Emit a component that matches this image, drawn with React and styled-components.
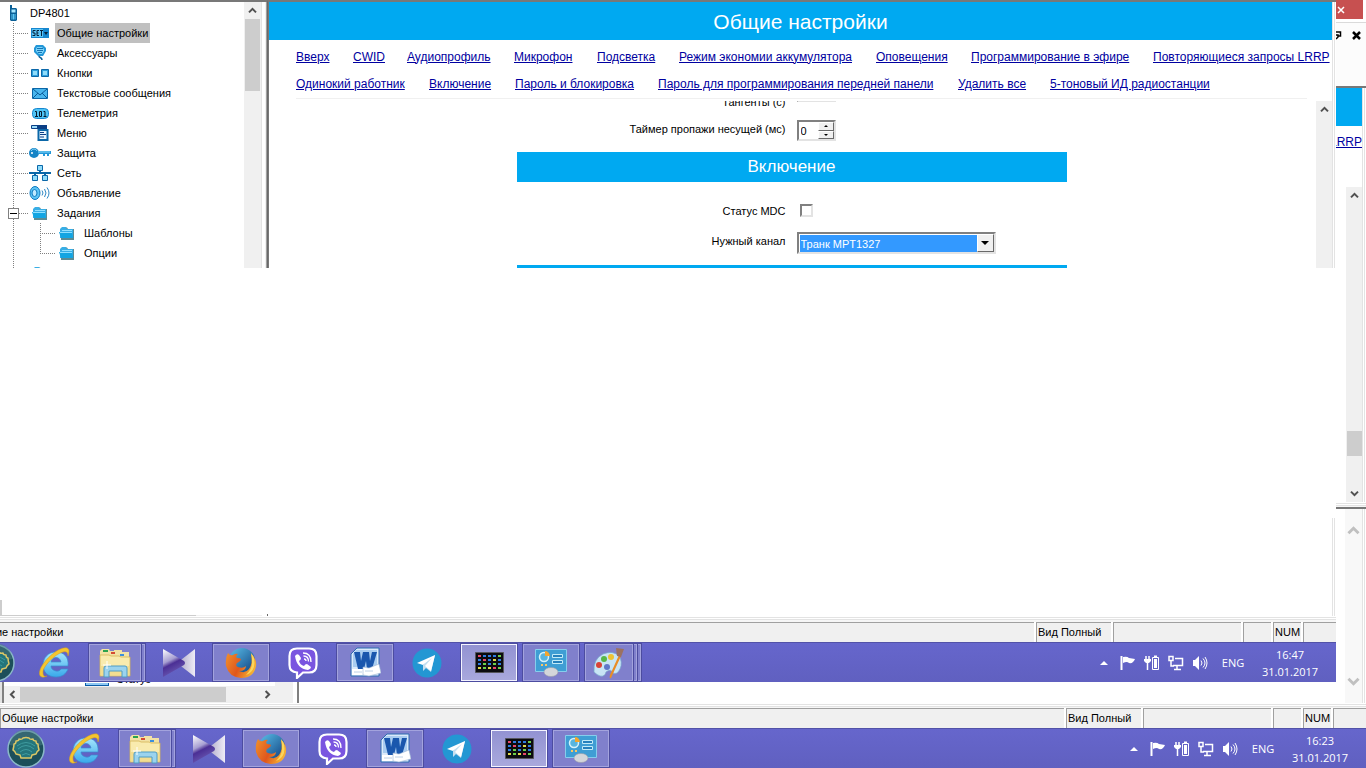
import React from "react";
import styled, { createGlobalStyle, css } from "styled-components";

const GlobalStyle = createGlobalStyle`
  * { box-sizing: border-box; }
  body {
    margin: 0;
    background: #ffffff;
    color: #000000;
    font-family: "Liberation Sans", Arial, sans-serif;
    font-size: 11px;
    line-height: 14px;
  }
  button, input, select { font: inherit; margin: 0; padding: 0; }
  svg { display: block; flex: none; }
`;

/* ---------- page frame ---------- */

const Page = styled.div`
  display: flex;
  flex-direction: column;
  min-height: 100vh;
`;

const Desktop = styled.div`
  display: grid;
  grid-template-columns: minmax(0, 1fr) 30px;
  flex: 1;
`;

const LeftStack = styled.div`
  display: flex;
  flex-direction: column;
`;

const FrontWindow = styled.div`
  display: flex;
  flex-direction: column;
  flex: 1;
  overflow: hidden;
`;

const Workspace = styled.main`
  display: grid;
  grid-template-columns: 268px minmax(0, 1fr);
  grid-template-rows: 268px;
`;

/* ---------- tree ---------- */

const Sidebar = styled.nav`
  display: flex;
  border-top: 2px solid #787878;
  border-right: 1px solid #696969;
  overflow: hidden;
`;

const Tree = styled.ul`
  flex: 1;
  margin: 0;
  padding: 1px 0 0 0;
  list-style: none;
`;

const Branch = styled.li`
  display: flex;
  align-items: center;
  height: 20px;
  padding-left: 13px;
  background: ${(p) =>
    p.$root
      ? "none"
      : "repeating-linear-gradient(to bottom, #808080 0 1px, transparent 1px 2px) 13px 0 / 1px 100% no-repeat"};
`;

const Dots = styled.span`
  flex: none;
  width: ${(p) => p.$w}px;
  height: 1px;
  background: repeating-linear-gradient(to right, #808080 0 1px, transparent 1px 2px);
`;

const SubDots = styled.span`
  flex: none;
  align-self: stretch;
  width: 15px;
  margin-left: 27px;
  background:
    repeating-linear-gradient(to bottom, #808080 0 1px, transparent 1px 2px) 0 0 / 1px ${(p) => (p.$last ? "50%" : "100%")} no-repeat,
    repeating-linear-gradient(to right, #808080 0 1px, transparent 1px 2px) 0 10px / 15px 1px no-repeat;
`;

const Expander = styled.button`
  flex: none;
  display: grid;
  place-items: center;
  width: 11px;
  height: 11px;
  margin-left: -5px;
  border: 1px solid #808080;
  background: #ffffff;
  &::after { content: ""; width: 7px; height: 1px; background: #000000; }
`;

const IconBox = styled.span`
  flex: none;
  display: flex;
  justify-content: center;
  width: 24px;
  margin-right: 3px;
`;

const TreeLabel = styled.a`
  padding: 3px 2px;
  color: #000000;
  text-decoration: none;
  white-space: nowrap;
  background: ${(p) => (p.$selected ? "#c0c0c0" : "transparent")};
`;

const RootIcon = styled.span`
  flex: none;
  width: 19px;
  margin-left: -4px;
`;

/* ---------- scroll bars and edges ---------- */

const ScrollTrack = styled.div`
  flex: ${(p) => (p.$grow ? "1" : "none")};
  display: flex;
  flex-direction: ${(p) => (p.$row ? "row" : "column")};
  align-items: center;
  ${(p) => (p.$row ? "height: 16px; width: 271px;" : "width: 16px;")}
  background: #f0f0f0;
`;

const ScrollArrow = styled.button`
  flex: none;
  display: grid;
  place-items: center;
  width: 16px;
  height: 17px;
  border: 0;
  background: none;
`;

const Thumb = styled.div`
  background: #cdcdcd;
  ${(p) => (p.$row ? `height: 15px; width: ${p.$size}px;` : `width: 15px; height: ${p.$size}px;`)}
`;

const Spacer = styled.div`
  flex: 1;
`;

const Gap = styled.div`
  height: 29px;
`;

const SideEdge = styled.div`
  flex: none;
  width: 7px;
  background: linear-gradient(to right, #f0f0f0 0 1px, #e3e3e3 1px 2px, #ffffff 2px 5px, #f0f0f0 5px 6px, #a0a0a0 6px 7px);
`;

const RightEdge = styled.div`
  flex: none;
  width: 4px;
  background: linear-gradient(to right, #e3e3e3 0 1px, #ffffff 1px 2px, #e3e3e3 2px 3px, #ffffff 3px 4px);
`;

/* ---------- settings panel ---------- */

const Panel = styled.section`
  display: flex;
  border-top: 2px solid #787878;
  min-width: 0;
`;

const PanelMain = styled.div`
  flex: 1;
  display: flex;
  flex-direction: column;
  min-width: 0;
  overflow: hidden;
  border-left: 1px solid #787878;
`;

const Title = styled.h1`
  flex: none;
  margin: 0;
  height: 38px;
  background: #00a9f1;
  color: #ffffff;
  font-size: 21px;
  font-weight: 400;
  line-height: 40px;
  text-align: center;
`;

const LinkArea = styled.div`
  flex: none;
  height: 59px;
  margin: 0 25px 0 27px;
  padding-top: 3px;
  border-bottom: 1px solid #f0f0f0;
`;

const LinkRow = styled.div`
  display: flex;
  height: 27px;
  align-items: center;
`;

const LinkCell = styled.div`
  flex: none;
  width: ${(p) => p.$w}px;
  white-space: nowrap;
`;

const NavLink = styled.a`
  color: #0000a0;
  font-size: 12px;
`;

const ScrollPane = styled.div`
  flex: 1;
  display: flex;
  min-height: 0;
  margin-top: 2px;
  overflow: hidden;
`;

const Form = styled.form`
  flex: 1;
  display: flex;
  flex-direction: column;
  align-items: center;
  margin-top: -20px;
  padding-right: 2px;
`;

const Row = styled.div`
  flex: none;
  display: grid;
  grid-template-columns: 269px 1fr;
  column-gap: 11px;
  width: 550px;
  height: ${(p) => p.$h}px;
  align-items: start;
`;

const Label = styled.label`
  padding-top: ${(p) => p.$top || 0}px;
  text-align: right;
`;

const SectionTitle = styled.h2`
  flex: none;
  width: 550px;
  height: 30px;
  margin: 0 0 ${(p) => p.$gap}px;
  background: #00a9f1;
  color: #ffffff;
  font-size: 17px;
  font-weight: 400;
  line-height: 30px;
  text-align: center;
`;

const sunken = css`
  border: 2px solid;
  border-color: #808080 #e3e3e3 #e3e3e3 #808080;
  background: #ffffff;
`;

const raised = css`
  border: 1px solid;
  border-color: #ffffff #696969 #696969 #ffffff;
  background: #f0f0f0;
`;

const SpinBox = styled.div`
  display: grid;
  grid-template-columns: 1fr 16px;
  width: 39px;
  height: 21px;
  ${sunken}
`;

const SpinInput = styled.input`
  width: 100%;
  border: 0;
  padding-left: 2px;
  outline: 0;
`;

const SpinButtons = styled.div`
  display: grid;
  grid-template-rows: 1fr 1fr;
  min-height: 0;
`;

const SpinButton = styled.button`
  display: grid;
  place-items: center;
  ${raised}
`;

const Check = styled.input`
  appearance: none;
  width: 13px;
  height: 13px;
  margin-left: 3px;
  ${sunken}
`;

const SelectBox = styled.div`
  display: grid;
  grid-template-columns: 1fr 17px;
  width: 199px;
  height: 22px;
  ${sunken}
`;

const Select = styled.select`
  grid-area: 1 / 1 / 2 / 3;
  appearance: none;
  width: 100%;
  padding: 1px 0 0 2px;
  border: 0;
  border-radius: 0;
  outline: 0;
  background: linear-gradient(to right, #3399ff, #3399ff) 1px 1px / calc(100% - 18px) calc(100% - 1px) no-repeat #ffffff;
  color: #ffffff;
`;

const SelectArrow = styled.span`
  grid-area: 1 / 2;
  display: grid;
  place-items: center;
  pointer-events: none;
  z-index: 1;
  ${raised}
`;

/* ---------- lower front edge ---------- */

const Blank = styled.div`
  flex: 1;
  display: flex;
  align-items: flex-end;
  justify-content: space-between;
`;

const TreeRemnant = styled.div`
  width: 268px;
  height: 16px;
  border-left: 2px solid #cdcdcd;
  background:
    linear-gradient(#cdcdcd, #cdcdcd) 0 100% / 194px 1px no-repeat,
    linear-gradient(#f0f0f0, #f0f0f0) 0 100% / 260px 1px no-repeat,
    linear-gradient(#696969, #696969) 100% 100% / 1px 2px no-repeat;
`;

const TallEdge = styled(RightEdge)`
  height: 98px;
`;

const FrameLines = styled.div`
  flex: none;
  height: ${(p) => p.$h || 6}px;
  background: linear-gradient(#ffffff 0 1px, #e3e3e3 1px 2px, #ffffff 2px 3px, #e3e3e3 3px 4px, #f6f6f6 4px 6px);
`;

const ShiftedBars = styled.div`
  flex: none;
  margin-left: -30px;
`;

/* ---------- status bar ---------- */

const StatusRow = styled.footer`
  display: grid;
  grid-template-columns: minmax(0, 1fr) 75px 128px 28px 28px 33px;
  column-gap: 2px;
  height: 20px;
  background: #ffffff;
`;

const StatusCell = styled.div`
  border-top: 1px solid #a0a0a0;
  border-left: 1px solid #a0a0a0;
  background: #f0f0f0;
  padding: 2px 1px 0;
  white-space: nowrap;
  overflow: hidden;
`;

/* ---------- task bar ---------- */

const Bar = styled.div`
  display: flex;
  justify-content: space-between;
  height: 40px;
  border-top: 1px solid #5252a8;
  background: linear-gradient(#6666cc, #6060c0);
`;

const Apps = styled.div`
  display: flex;
  gap: 4px;
`;

const AppButton = styled.button`
  display: flex;
  width: ${(p) => p.$w || 58}px;
  height: 39px;
  border: 0;
  background: none;
`;

const Face = styled.span`
  flex: 1;
  display: grid;
  place-items: center;
  height: 39px;
  ${(p) =>
    p.$mode &&
    css`
      border: 1px solid #4c4ca0;
      box-shadow: inset 0 0 0 1px ${p.$mode === "active" ? "#f4f4ff" : "#a3a3dd"};
      background: ${p.$mode === "active" ? "linear-gradient(#9292d2, #a9a9dd)" : "#8080cc"};
    `}
`;

const StackEdge = styled.span`
  width: 4px;
  height: 39px;
  border: 1px solid #4c4ca0;
  border-left: 0;
  box-shadow: inset -1px 1px 0 #a3a3dd, inset 0 -1px 0 #a3a3dd;
  background: #8080cc;
`;

const Tray = styled.div`
  display: flex;
  align-items: center;
  color: #ffffff;
  font-family: "Open Sans", "Noto Sans", sans-serif;
`;

const TrayIcon = styled.button`
  display: grid;
  place-items: center;
  width: 24px;
  height: 39px;
  border: 0;
  background: none;
`;

const Language = styled.button`
  width: 42px;
  border: 0;
  background: none;
  color: inherit;
  text-align: center;
`;

const Clock = styled.time`
  width: 82px;
  padding-right: 10px;
  line-height: 17px;
  text-align: center;
`;

/* ---------- rear window ---------- */

const RearStrip = styled.div`
  display: flex;
  height: 21px;
`;

const RearTree = styled.div`
  width: 293px;
  padding-left: 4px;
  background: linear-gradient(to right, #e3e3e3 0 2px, #808080 2px 4px, #f0f0f0 4px);
`;

const RearItem = styled.div`
  display: flex;
  align-items: flex-end;
  gap: 7px;
  height: 4px;
  width: 271px;
  padding-left: 81px;
  overflow: hidden;
  background: #ffffff;
`;

const RearBadge = styled.span`
  width: 24px;
  height: 3px;
  border: 1px solid #0c5ea8;
  border-top: 0;
  background: #8ec8f4;
`;

const RearPanel = styled.div`
  flex: 1;
  margin-left: 4px;
  border-left: 2px solid #808080;
`;

const RearColumn = styled.aside`
  display: flex;
  flex-direction: column;
  overflow: hidden;
`;

const CloseButton = styled.button`
  flex: none;
  display: flex;
  align-items: center;
  width: 27px;
  height: 19px;
  border: 0;
  padding-left: 1px;
  background: #c75050;
`;

const RearToolbar = styled.div`
  flex: none;
  display: flex;
  align-items: flex-start;
  justify-content: space-between;
  height: 64px;
  margin-top: 3px;
  padding: 8px 5px 0 0;
  border-top: 1px solid #dadada;
  background: #fcfcfc;
`;

const RearPane = styled.div`
  flex: none;
  display: flex;
  height: 416px;
  border-top: 2px solid #787878;
`;

const RearBody = styled.div`
  flex: 1;
  display: flex;
  flex-direction: column;
  align-items: flex-end;
  min-width: 0;
  overflow: hidden;
`;

const RearHeader = styled.div`
  flex: none;
  width: 100%;
  height: 38px;
  background: #00a9f1;
`;

const RearLink = styled.div`
  flex: none;
  height: 61px;
  padding-top: 9px;
  white-space: nowrap;
`;

const LowerPane = styled.div`
  flex: 1;
  display: flex;
  justify-content: flex-end;
  border-top: 2px solid #787878;
`;

const LowerTrack = styled.div`
  display: flex;
  flex-direction: column;
  align-items: center;
  justify-content: space-between;
  width: 17px;
  padding: 15px 0;
  background: #f8f8f8;
`;

/* ---------- drawings ---------- */

const Chevron = ({ dir = "up", color = "#505050", size = 9 }) => {
  const turn = { up: 0, right: 90, down: 180, left: 270 }[dir];
  return (
    <svg width={size} height={size} viewBox="0 0 9 9">
      <path d="M1 6.4 4.5 2.9 8 6.4" fill="none" stroke={color} strokeWidth="2" transform={`rotate(${turn} 4.5 4.5)`} />
    </svg>
  );
};

const Triangle = ({ down, w = 5 }) => (
  <svg width={w} height={Math.ceil(w / 2)} viewBox="0 0 6 3" preserveAspectRatio="none">
    <path d={down ? "M0 0h6L3 3z" : "M0 3h6L3 0z"} fill="#000" />
  </svg>
);

const PhoneIcon = () => (
  <svg width="9" height="16" viewBox="0 0 9 16">
    <path d="M1 0h2v3h4l1 1v11l-1 1H2l-1-1z" fill="#0a5f96" />
    <path d="M2.500 4.500h4v3h-4z" fill="#a5e6ff" />
    <path d="M2.500 9h4v5.500h-4z" fill="#5cc8f6" />
    <path d="M3 10h1M5 10h1M3 12h1M5 12h1M3 14h1M5 14h1" stroke="#0a5f96" />
  </svg>
);

const SetIcon = () => (
  <svg width="18" height="10" viewBox="0 0 18 10">
    <path d="M0 0h18v10H0z" fill="#1787cf" />
    <path d="M1 1h11v8H1z" fill="#5cc4f5" />
    <path d="M4.500 2.500H2V5h2v2.500H1.500M8 2.500H6v5h2M6 5h1.500M9 2.500h3M10.500 2.500V8" fill="none" stroke="#04203c" />
    <path d="M13 4h4l-2 3z" fill="#04203c" />
  </svg>
);

const MicIcon = () => (
  <svg width="14" height="16" viewBox="0 0 14 16">
    <path d="M3 0h7l3 3v3l-3 5H5L1 7V3z" fill="#2397d8" />
    <path d="M4 2h5l2 2v2L9 9H6L3 6V4z" fill="#7bd4fa" />
    <path d="M4 3.500h6M4 5.500h6M5 7.500h4" stroke="#1673b3" />
    <path d="M6 11c0 2 3 1 3 4" fill="none" stroke="#0a5f96" strokeWidth="1.500" />
  </svg>
);

const ButtonsIcon = () => (
  <svg width="18" height="8" viewBox="0 0 18 8">
    <path d="M.5.5h7v7h-7zM10.500.5h7v7h-7z" fill="#2f9fdc" stroke="#0b67a8" />
    <path d="M2 2h4v4H2zM12 2h4v4h-4z" fill="#8fdcfb" />
  </svg>
);

const MailIcon = () => (
  <svg width="16" height="11" viewBox="0 0 16 11">
    <path d="M.5.5h15v10H.5z" fill="#49b6ee" stroke="#0b67a8" />
    <path d="M1 1l7 6 7-6M1 10l5-5M15 10l-5-5" fill="none" stroke="#0b5a96" />
  </svg>
);

const TelemetryIcon = () => (
  <svg width="17" height="11" viewBox="0 0 17 11">
    <rect x=".5" y=".5" width="16" height="10" rx="4" fill="#4fc3f5" stroke="#1787cf" />
    <path d="M3 3.500h1.500V8.500M3 8.500h3M7.500 3.500h2v5h-2zM11.500 3.500H13v5M11.500 8.500h3" fill="none" stroke="#031a30" />
  </svg>
);

const MenuIcon = () => (
  <svg width="18" height="16" viewBox="0 0 18 16">
    <path d="M.5.5h15v3H.5z" fill="#9bdcfa" stroke="#0b3f86" />
    <path d="M6 0h10v4H6z" fill="#0b3f86" />
    <path d="M7.500 5h9v10h-9z" fill="#e8f6ff" stroke="#0b67a8" strokeWidth="2" />
    <path d="M9 7.500h4M9 9.500h6M9 12h4" stroke="#0b3f86" />
  </svg>
);

const KeyIcon = () => (
  <svg width="22" height="12" viewBox="0 0 22 12">
    <circle cx="5" cy="6" r="5" fill="#1684c6" />
    <path d="M9 4h13v3h-2v2h-2V7h-2v2h-2V7H9z" fill="#2397d8" />
    <path d="M2 4c2-3 5-2 6 0M9 5h12" fill="none" stroke="#8fdcfb" />
    <circle cx="3" cy="6" r="1" fill="#fff" />
  </svg>
);

const NetIcon = () => (
  <svg width="22" height="16" viewBox="0 0 22 16">
    <path d="M0 8h22M11 5v3M6 8v3M16 8v3" stroke="#0b67a8" strokeWidth="2" />
    <path d="M8.500.5h5v5h-5zM3.500 10.500h5v5h-5zM13.500 10.500h5v5h-5z" fill="#8fdcfb" stroke="#0b67a8" />
  </svg>
);

const SpeakIcon = () => (
  <svg width="22" height="14" viewBox="0 0 22 14">
    <ellipse cx="6" cy="7" rx="5" ry="6.500" fill="#5cc4f5" stroke="#0b78c0" />
    <ellipse cx="5.500" cy="7" rx="2.500" ry="3.500" fill="#bfeaff" stroke="#0b78c0" />
    <path d="M13 4.500q2 2.500 0 5M15.500 3q3 4 0 8M18 1.500q4 5.500 0 11" fill="none" stroke="#2d87c4" />
  </svg>
);

const FolderIcon = () => (
  <svg width="16" height="13" viewBox="0 0 16 13">
    <path d="M2 2 4 .5h4L9 2h6v11H2z" fill="#5d8b93" />
    <path d="M1 2 3 0h4l1 2h6v9H1z" fill="#38aee6" />
    <path d="M0 5h13l1 6H2z" fill="#12a5e2" />
    <path d="M1 5.500h12M3 3.500h10" stroke="#8fe0ff" />
  </svg>
);

const ShellIcon = () => (
  <svg width="38" height="38" viewBox="0 0 38 38">
    <circle cx="19" cy="19" r="18" fill="#1c4f5a" stroke="#8ab8c8" strokeWidth="1.500" />
    <path d="M3 15a16 16 0 0 1 32 0q-16 5-32 0z" fill="#4d7f88" opacity=".5" />
    <path
      d="M14 28h10l1-3 4-1q1-3 3-4-1-4-1-6-2 0-2-3-3 0-3-2-3 1-4-1-3-1-6 0-1 2-4 1 0 2-3 2 0 3-2 3 0 2-1 6 2 1 3 4l4 1z"
      fill="#24757b"
      stroke="#dcc765"
      strokeWidth="1.500"
      strokeLinejoin="round"
    />
    <path d="M11 19q8-7 16 0M13 22q6-5 12 0M15 25q4-3 8 0M10 16q9-7 18 0" stroke="#3f9b9f" fill="none" />
  </svg>
);

const IeIcon = () => (
  <svg width="32" height="34" viewBox="0 0 32 34">
    <defs>
      <linearGradient id="ieBlue" x2="0" y2="1">
        <stop offset="0" stopColor="#a6e6fd" />
        <stop offset="1" stopColor="#38a8ea" />
      </linearGradient>
    </defs>
    <path
      fillRule="evenodd"
      d="M17 6c8 0 13 5 12 14H12c0 5 8 7 10 3h7c-2 5-6 8-12 8C9 31 4 26 4 19S9 6 17 6zm-5 10h10c-1-6-9-6-10 0z"
      fill="url(#ieBlue)"
      stroke="#3a8cd0"
      strokeWidth=".7"
    />
    <path d="M8 30c-6 3-9 0-7-6C5 13 21 0 28 2c3 1 2 5 1 8 0-4-2-5-5-4C16 8 3 21 4 27c0 3 2 4 4 3z" fill="#f5c52f" stroke="#cf9a20" strokeWidth=".5" />
  </svg>
);

const ExplorerIcon = () => (
  <svg width="32" height="30" viewBox="0 0 32 30">
    <path d="M1 9V3l2-2h7l1 2h4V2h8v2h7v6z" fill="#f2e2a4" />
    <path d="M4 2h5v2H4z" fill="#2ba34e" />
    <path d="M12 4h4v2h-4z" fill="#d54b32" />
    <path d="M21 6h4v2h-4z" fill="#3c8fdc" />
    <path d="M1 7h9l2 1h8l2 1h9v19H1z" fill="#f9ebae" stroke="#d4b455" strokeWidth=".8" />
    <path d="M2 18h28v9H2z" fill="#efd37b" opacity=".6" />
    <path d="M5 29V20q0-2 2-2h19q2 0 2 2v9h-5v-6H10v6z" fill="#9bd3ee" stroke="#4f9cc5" />
    <path d="M8 13v8M4 17h8" stroke="#fff" />
  </svg>
);

const KmIcon = () => (
  <svg width="32" height="28" viewBox="0 0 32 28">
    <defs>
      <linearGradient id="kmLeft" x1="0" y1="0" x2=".4" y2="1">
        <stop offset="0" stopColor="#ffffff" />
        <stop offset=".45" stopColor="#a79fd2" />
        <stop offset=".6" stopColor="#4b2f95" />
        <stop offset="1" stopColor="#6c5cb4" />
      </linearGradient>
      <linearGradient id="kmRight" x2="1">
        <stop offset="0" stopColor="#a9a3c4" />
        <stop offset="1" stopColor="#eeecf6" />
      </linearGradient>
    </defs>
    <path d="M32 0v28L14 14z" fill="url(#kmRight)" />
    <path d="M0 0l21 12q2 2 0 4L0 28z" fill="url(#kmLeft)" />
  </svg>
);

const FirefoxIcon = () => (
  <svg width="32" height="32" viewBox="0 0 32 32">
    <defs>
      <linearGradient id="foxFur" x1="0" y1=".2" x2="1" y2=".6">
        <stop offset="0" stopColor="#ef8a2a" />
        <stop offset=".5" stopColor="#e0561d" />
        <stop offset="1" stopColor="#f7b733" />
      </linearGradient>
      <linearGradient id="foxGlobe" x1="0" y1="0" x2="1" y2="1">
        <stop offset="0" stopColor="#5cc0ea" />
        <stop offset="1" stopColor="#0c3c7c" />
      </linearGradient>
    </defs>
    <circle cx="17" cy="14" r="13" fill="url(#foxGlobe)" />
    <path
      d="M3 6q2 3 5 2 3-2 5-1-3 2-1 4 3 0 4 1 0 2-4 4-2 3 1 4 5 2 8-1 0 5-7 5 6 3 10-2 4-5 2-15 6 5 5 12Q29 31 16 31 4 30 1 19 0 11 3 6z"
      fill="url(#foxFur)"
    />
    <path d="M26 6q5 5 3 14-2 6-8 8 6-6 6-12 0-6-1-10z" fill="#fbd65a" />
  </svg>
);

const ViberIcon = () => (
  <svg width="30" height="32" viewBox="0 0 30 32">
    <path d="M9 1.500h12q7.500 0 7.500 7.500v9q0 7.500-7.500 7.500h-6L9 31v-5.500Q1.500 25 1.500 18V9q0-7.500 7.500-7.500z" fill="#7a55e0" stroke="#fff" strokeWidth="2.200" />
    <path d="M7 9q2-3 4-1l2 3q0 2-2 3 1 4 5 5 1-2 3-2l4 3q0 2-3 3Q9 22 7 9z" fill="#fff" />
    <path d="M15 6q8 0 8 9M15.500 9q5 0 5 5.500M16 12q2 0 2 2" fill="none" stroke="#fff" strokeWidth="1.300" />
  </svg>
);

const WordIcon = () => (
  <svg width="31" height="31" viewBox="0 0 31 31">
    <path d="M1 7 7 1h22v28H1z" fill="#dbeafa" stroke="#2f6cb0" />
    <path d="M6 3h21v17H3V7z" fill="#a9cdf0" />
    <path d="M4 5h6l1 9 2-9h6l1 9 2-9h5l-5 17h-5l-1-8-2 8H8z" fill="#1a57ad" />
    <path d="M2 22h12l-1 6H2z" fill="#fff" />
    <path d="M13 20l6 1 10-4 2 9-12 3-6-1z" fill="#fff" stroke="#9cb6d4" strokeWidth=".6" />
    <path d="M15 24h8M4 25h8" stroke="#bcd0e6" />
  </svg>
);

const TelegramIcon = () => (
  <svg width="30" height="30" viewBox="0 0 30 30">
    <circle cx="15" cy="15" r="14.500" fill="#2397d3" />
    <path d="M11 17v6l3-3 5 4L23 7z" fill="#c5dff0" />
    <path d="M5 15 23 7l-4 16-6-5 7-8-9 7z" fill="#fff" />
  </svg>
);

const ledColors = ["#e8486a", "#2f7de0", "#2f7de0", "#2f7de0", "#6cd04a", "#2f7de0", "#e8486a", "#2f7de0", "#e0d84a", "#2f7de0", "#2f7de0", "#6cd04a", "#2f7de0", "#6cd04a", "#2f7de0", "#e0d84a", "#6cd04a", "#e0d84a", "#e8486a", "#6cd04a"];

const LedIcon = () => (
  <svg width="29" height="21" viewBox="0 0 29 21">
    <path d="M.5.5h28v20H.5z" fill="#0c0c10" stroke="#55555c" />
    {ledColors.map((c, i) => (
      <rect key={i} x={3 + (i % 5) * 5} y={3 + Math.floor(i / 5) * 4} width="3" height="2" fill={c} />
    ))}
  </svg>
);

const ControlIcon = () => (
  <svg width="32" height="29" viewBox="0 0 32 29">
    <path d="M.5 1.500h31v22H.5z" fill="#3f9ed4" stroke="#87cdec" />
    <circle cx="9" cy="9" r="4.500" fill="#58b5df" stroke="#d6f2fb" strokeWidth="1.500" />
    <path d="M10 8V3q4 0 5 5z" fill="#f3a62e" />
    <path d="M17.500 6.500h10v3h-10zM17.500 12.500h10v3h-10z" fill="#2781bd" stroke="#c3ebf8" />
    <path d="M6 17h2M10 17h2" stroke="#f6c765" strokeWidth="2" />
    <ellipse cx="16" cy="24" rx="7" ry="4.500" fill="#d4d6da" stroke="#9699a0" strokeWidth=".5" />
  </svg>
);

const PaintIcon = () => (
  <svg width="32" height="32" viewBox="0 0 32 32">
    <path d="M1 25Q0 12 10 7q10-4 16 2 4 6 1 13-3 6-7 4-2-5-7-1-1 5-6 4-3-1-6-4z" fill="#c8e5f5" stroke="#78a8cc" strokeWidth=".7" />
    <circle cx="6" cy="18" r="3" fill="#d94336" />
    <circle cx="11" cy="12" r="3" fill="#58b749" />
    <circle cx="18" cy="10" r="3" fill="#eec333" />
    <circle cx="14" cy="20" r="3" fill="#5f78c9" />
    <path d="M26 8l2 1-10 22q-2 1-1-3z" fill="#e88d25" />
    <path d="M23 1l8 1-3 8-4-1z" fill="#9b7161" />
  </svg>
);

const FlagIcon = () => (
  <svg width="16" height="16" viewBox="0 0 16 16">
    <path d="M1.500 1v14" stroke="#fff" strokeWidth="2" />
    <path d="M3 2q4-1 6 1l6 1q-2 5-6 4-2-2-6 0z" fill="#fff" />
  </svg>
);

const BatteryIcon = () => (
  <svg width="16" height="16" viewBox="0 0 16 16">
    <path d="M2 1v3M5 1v3M3.500 7v8" stroke="#fff" strokeWidth="1.500" />
    <path d="M0 4h7v2L5 8H2L0 6z" fill="#fff" />
    <path d="M8.500 2.500h6v12h-6z" fill="none" stroke="#fff" />
    <path d="M10 1.500h3" stroke="#fff" strokeWidth="2" />
    <path d="M10 4h3v9h-3z" fill="#fff" />
  </svg>
);

const NetworkIcon = () => (
  <svg width="16" height="16" viewBox="0 0 16 16">
    <path d="M7 3.500h7.500v7H5M9 11v3M6 14.500h7M1 1.500h4v4H1zM3 6v5h3" fill="none" stroke="#fff" strokeWidth="1.500" />
  </svg>
);

const VolumeIcon = () => (
  <svg width="16" height="14" viewBox="0 0 16 14">
    <path d="M1 4h2l4-4v14l-4-4H1z" fill="#fff" />
    <path d="M9 4.500q2 2.500 0 5M11 2.500q4 4.500 0 9M13 1q4 6 0 12" fill="none" stroke="#fff" />
  </svg>
);

/* ---------- parts ---------- */

const treeItems = [
  { text: "Общие настройки", icon: SetIcon, selected: true },
  { text: "Аксессуары", icon: MicIcon },
  { text: "Кнопки", icon: ButtonsIcon },
  { text: "Текстовые сообщения", icon: MailIcon },
  { text: "Телеметрия", icon: TelemetryIcon },
  { text: "Меню", icon: MenuIcon },
  { text: "Защита", icon: KeyIcon },
  { text: "Сеть", icon: NetIcon },
  { text: "Объявление", icon: SpeakIcon },
  { text: "Задания", icon: FolderIcon, open: true },
  { text: "Шаблоны", icon: FolderIcon, sub: true },
  { text: "Опции", icon: FolderIcon, sub: true, last: true },
  { text: "", icon: FolderIcon },
];

const linkRows = [
  [
    ["Вверх", 57],
    ["CWID", 54],
    ["Аудиопрофиль", 107],
    ["Микрофон", 83],
    ["Подсветка", 82],
    ["Режим экономии аккумулятора", 197],
    ["Оповещения", 95],
    ["Программирование в эфире", 182],
    ["Повторяющиеся запросы LRRP", 190],
  ],
  [
    ["Одинокий работник", 133],
    ["Включение", 86],
    ["Пароль и блокировка", 143],
    ["Пароль для программирования передней панели", 300],
    ["Удалить все", 92],
    ["5-тоновый ИД радиостанции", 170],
  ],
];

const StatusBar = () => (
  <StatusRow>
    <StatusCell>Общие настройки</StatusCell>
    <StatusCell>Вид Полный</StatusCell>
    <StatusCell />
    <StatusCell />
    <StatusCell>NUM</StatusCell>
    <StatusCell />
  </StatusRow>
);

const apps = [
  { name: "Classic Shell", icon: ShellIcon, w: 52 },
  { name: "Internet Explorer", icon: IeIcon },
  { name: "Проводник", icon: ExplorerIcon, mode: "open", stack: 1 },
  { name: "KMPlayer", icon: KmIcon },
  { name: "Firefox", icon: FirefoxIcon, mode: "open" },
  { name: "Viber", icon: ViberIcon },
  { name: "Word", icon: WordIcon, mode: "open" },
  { name: "Telegram", icon: TelegramIcon },
  { name: "CPS", icon: LedIcon, mode: "active" },
  { name: "Панель управления", icon: ControlIcon, mode: "open" },
  { name: "Paint", icon: PaintIcon, mode: "open", stack: 2 },
];

const TaskBar = ({ count, time }) => (
  <Bar>
    <Apps>
      {apps.slice(0, count).map((a) => (
        <AppButton key={a.name} $w={a.w} aria-label={a.name}>
          <Face $mode={a.mode}>
            <a.icon />
          </Face>
          {Array.from({ length: a.stack || 0 }, (_, i) => (
            <StackEdge key={i} />
          ))}
        </AppButton>
      ))}
    </Apps>
    <Tray>
      <TrayIcon aria-label="Скрытые значки">
        <svg width="8" height="4" viewBox="0 0 8 4">
          <path d="M0 4h8L4 0z" fill="#fff" />
        </svg>
      </TrayIcon>
      <TrayIcon aria-label="Уведомления"><FlagIcon /></TrayIcon>
      <TrayIcon aria-label="Питание"><BatteryIcon /></TrayIcon>
      <TrayIcon aria-label="Сеть"><NetworkIcon /></TrayIcon>
      <TrayIcon aria-label="Громкость"><VolumeIcon /></TrayIcon>
      <Language>ENG</Language>
      <Clock>
        {time}
        <br />
        31.01.2017
      </Clock>
    </Tray>
  </Bar>
);

const DeviceTree = () => (
  <Sidebar>
    <Tree>
      <Branch $root>
        <RootIcon><PhoneIcon /></RootIcon>
        <TreeLabel href="#device">DP4801</TreeLabel>
      </Branch>
      {treeItems.map(({ text, icon: Icon, selected, open, sub, last }) => (
        <Branch key={text}>
          {sub && <SubDots $last={last} />}
          {open && <Expander aria-label="Свернуть" />}
          {!sub && <Dots $w={open ? 9 : 15} />}
          <IconBox><Icon /></IconBox>
          {text && <TreeLabel href="#item" $selected={selected}>{text}</TreeLabel>}
        </Branch>
      ))}
    </Tree>
    <ScrollTrack>
      <ScrollArrow aria-label="Вверх"><Chevron /></ScrollArrow>
      <Thumb $size={72} />
    </ScrollTrack>
    <SideEdge />
  </Sidebar>
);

const SettingsPanel = () => (
  <Panel>
    <PanelMain>
      <Title>Общие настройки</Title>
      <LinkArea>
        {linkRows.map((row, i) => (
          <LinkRow key={i}>
            {row.map(([text, w]) => (
              <LinkCell key={text} $w={w}>
                <NavLink href="#section">{text}</NavLink>
              </LinkCell>
            ))}
          </LinkRow>
        ))}
      </LinkArea>
      <ScrollPane>
        <Form>
          <Row $h={39}>
            <Label htmlFor="ptt" $top={14}>Тангенты (с)</Label>
            <SpinBox>
              <SpinInput id="ptt" defaultValue="0" />
              <SpinButtons>
                <SpinButton type="button" aria-label="Больше" />
                <SpinButton type="button" aria-label="Меньше" />
              </SpinButtons>
            </SpinBox>
          </Row>
          <Row $h={32}>
            <Label htmlFor="carrier" $top={2}>Таймер пропажи несущей (мс)</Label>
            <SpinBox>
              <SpinInput id="carrier" defaultValue="0" />
              <SpinButtons>
                <SpinButton type="button" aria-label="Больше"><Triangle w={4} /></SpinButton>
                <SpinButton type="button" aria-label="Меньше"><Triangle w={4} down /></SpinButton>
              </SpinButtons>
            </SpinBox>
          </Row>
          <SectionTitle $gap={22}>Включение</SectionTitle>
          <Row $h={28}>
            <Label htmlFor="mdc">Статус MDC</Label>
            <Check id="mdc" type="checkbox" />
          </Row>
          <Row $h={33}>
            <Label htmlFor="channel" $top={2}>Нужный канал</Label>
            <SelectBox>
              <Select id="channel">
                <option>Транк MPT1327</option>
              </Select>
              <SelectArrow><Triangle w={8} down /></SelectArrow>
            </SelectBox>
          </Row>
          <SectionTitle $gap={0} />
        </Form>
        <ScrollTrack>
          <ScrollArrow aria-label="Прокрутить вверх"><Chevron /></ScrollArrow>
        </ScrollTrack>
      </ScrollPane>
    </PanelMain>
    <RightEdge />
  </Panel>
);

const RearWindowEdge = () => (
  <RearColumn>
    <CloseButton aria-label="Закрыть">
      <svg width="8" height="8" viewBox="0 0 8 8">
        <path d="M1 1l6 6M7 1 1 7" stroke="#fff" strokeWidth="1.500" />
      </svg>
    </CloseButton>
    <RearToolbar>
      <svg width="6" height="9" viewBox="0 0 6 9">
        <path d="M0 1h4.500v4H2M0 4h2v2L0 8" fill="none" stroke="#000" strokeWidth="1.500" />
      </svg>
      <svg width="9" height="9" viewBox="0 0 9 9">
        <path d="M1 1l7 7M8 1 1 8" stroke="#000" strokeWidth="2.500" />
      </svg>
    </RearToolbar>
    <RearPane>
      <RearBody>
        <RearHeader />
        <RearLink>
          <NavLink href="#lrrp">Повторяющиеся запросы LRRP</NavLink>
        </RearLink>
        <ScrollTrack $grow>
          <ScrollArrow aria-label="Прокрутить вверх"><Chevron /></ScrollArrow>
          <Spacer />
          <Thumb $size={25} />
          <Gap />
          <ScrollArrow aria-label="Прокрутить вниз"><Chevron dir="down" /></ScrollArrow>
        </ScrollTrack>
      </RearBody>
      <RightEdge />
    </RearPane>
    <FrameLines $h={5} />
    <LowerPane>
      <LowerTrack>
        <Chevron color="#c0c0c0" size={13} />
        <Chevron dir="down" color="#c0c0c0" size={13} />
      </LowerTrack>
      <RightEdge />
    </LowerPane>
    <FrameLines $h={5} />
  </RearColumn>
);

export default function App() {
  return (
    <Page>
      <GlobalStyle />
      <Desktop>
        <LeftStack>
          <FrontWindow>
            <Workspace>
              <DeviceTree />
              <SettingsPanel />
            </Workspace>
            <Blank>
              <TreeRemnant />
              <TallEdge />
            </Blank>
            <FrameLines />
            <ShiftedBars>
              <StatusBar />
              <TaskBar count={11} time="16:47" />
            </ShiftedBars>
          </FrontWindow>
          <RearStrip>
            <RearTree>
              <RearItem>
                <RearBadge />
                <span>Статус</span>
              </RearItem>
              <ScrollTrack $row>
                <ScrollArrow aria-label="Влево"><Chevron dir="left" /></ScrollArrow>
                <Thumb $row $size={206} />
                <Spacer />
                <ScrollArrow aria-label="Вправо"><Chevron dir="right" /></ScrollArrow>
              </ScrollTrack>
            </RearTree>
            <RearPanel />
          </RearStrip>
          <FrameLines $h={5} />
        </LeftStack>
        <RearWindowEdge />
      </Desktop>
      <StatusBar />
      <TaskBar count={10} time="16:23" />
    </Page>
  );
}
